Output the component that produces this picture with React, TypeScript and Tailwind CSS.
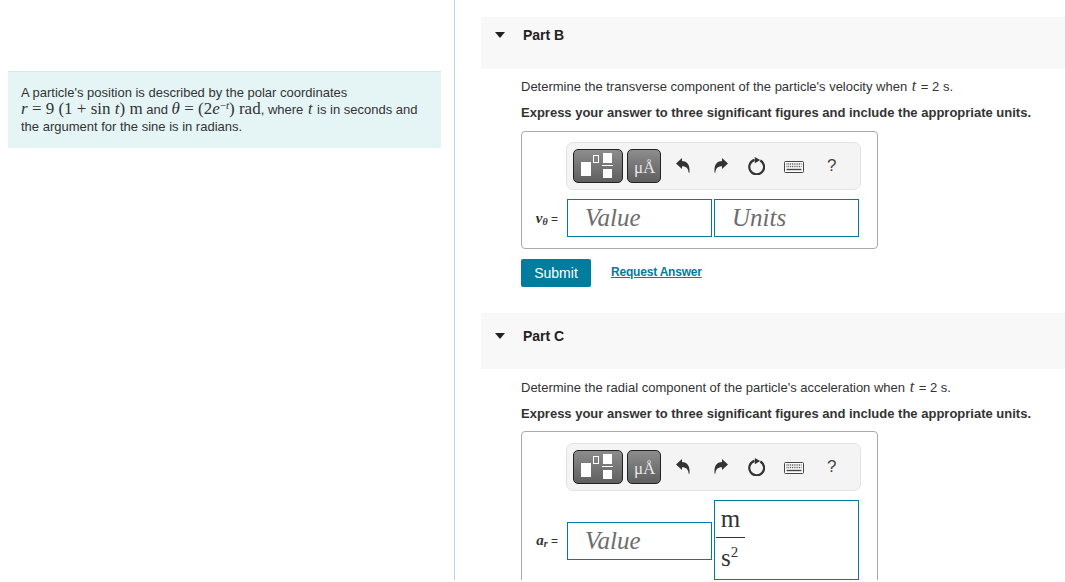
const sans = "font-['Liberation_Sans',Arial,sans-serif]";

function Undo({ flip }: { flip?: boolean }) {
  return (
    <svg width="14" height="15" viewBox="0 0 14 15" className={flip ? "-scale-x-100" : ""}>
      <path d="M0 5.500 L6 0 V3 C10.800 3 14.300 6.500 13.400 14.800 L12.600 14.800 C12.600 11 10.500 8.300 6 8.300 V11 Z" fill="#333" />
    </svg>
  );
}

function Reset() {
  return (
    <svg width="17" height="18" viewBox="0 0 17 18">
      <path d="M6.500 2.900 A7.400 7.400 0 1 0 12.300 3.500" fill="none" stroke="#333" strokeWidth="2.200" />
      <path d="M6.800 0 L12.200 3 L6.800 6.200 Z" fill="#333" />
    </svg>
  );
}

function Keyboard() {
  return (
    <svg width="20" height="12" viewBox="0 0 20 12">
      <rect x="0.500" y="0.500" width="19" height="11" rx="1" fill="#fff" stroke="#444" />
      <path d="M2.500 3 H17.500 M2.500 5.500 H17.500" stroke="#555" strokeWidth="1.400" strokeDasharray="1 0.800" />
      <path d="M2.500 8.500 H17.500" stroke="#444" strokeWidth="1.400" />
    </svg>
  );
}

function Toolbar() {
  return (
    <div className="ml-[44px] w-[295px] h-[48px] rounded-[7px] border border-[#e3e3e3] bg-[#f4f4f4] flex items-center pl-[6px]">
      <div className="w-[50px] h-[34px] rounded-[5px] border border-[#222] bg-gradient-to-b from-[#8d8d8d] to-[#5f5f5f] relative shrink-0">
        <span className="absolute left-[7px] top-[12px] w-[10px] h-[14px] bg-white" />
        <span className="absolute left-[19px] top-[5px] w-[6px] h-[8px] border border-white" />
        <span className="absolute left-[29px] top-[3px] w-[9px] h-[10px] bg-white" />
        <span className="absolute left-[28px] top-[15px] w-[11px] h-px bg-white" />
        <span className="absolute left-[29px] top-[19px] w-[9px] h-[9px] bg-white" />
      </div>
      <div className="ml-[4px] w-[34px] h-[34px] rounded-[5px] border border-[#222] bg-gradient-to-b from-[#8d8d8d] to-[#5f5f5f] shrink-0 relative text-[#e8e8e8] font-['Liberation_Serif',serif] text-[17px] leading-[20px]">
        <span className="absolute left-[6px] top-[8px]">μÅ</span>
      </div>
      <div className="ml-[15px] -mt-[1px] flex items-center"><Undo /></div>
      <div className="ml-[24px] -mt-[1px] flex items-center"><Undo flip /></div>
      <div className="ml-[20px] -mt-[1px] flex items-center"><Reset /></div>
      <div className="ml-[19px] mt-[1px] flex items-center"><Keyboard /></div>
      <span className={sans + " ml-[23px] -mt-[1px] text-[17px] text-[#444] leading-none"}>?</span>
    </div>
  );
}

function Field({ children, className }: { children: React.ReactNode; className?: string }) {
  return (
    <div className={"w-[145px] h-[38px] border border-[#007c9e] bg-white flex items-center pl-[17px] font-['Liberation_Serif',serif] italic text-[25px] text-[#6d6d6d] " + (className ?? "")}>
      {children}
    </div>
  );
}

function PartHeader({ label, h, top }: { label: string; h: string; top: string }) {
  return (
    <div className={"ml-[26px] bg-[#f8f8f8] flex items-start " + h + " " + top}>
      <span className="ml-[14px] mt-[15px] w-0 h-0 border-x-[5.5px] border-x-transparent border-t-[6px] border-t-[#222]" />
      <span className={sans + " ml-[18px] mt-[10px] text-[14px] font-bold text-[#222] leading-[16px]"}>{label}</span>
    </div>
  );
}

const Serif = ({ children }: { children: React.ReactNode }) => (
  <span className="font-['Liberation_Serif',serif] text-[17px] leading-none">{children}</span>
);
const I = ({ children }: { children: React.ReactNode }) => (
  <span className="font-['Liberation_Serif',serif] italic text-[17px] leading-none">{children}</span>
);
const T = () => (
  <span className="mx-[1px] font-['Liberation_Serif',serif] italic text-[16px] leading-none">t</span>
);

export default function App() {
  return (
    <div className={sans + " w-[1065px] h-[580px] overflow-hidden flex bg-white text-[#333]"}>
      <div className="w-[455px] h-full shrink-0 border-r border-[#bcd0e0] pl-[8px] pt-[71px]">
        <div className="w-[433px] h-[77px] bg-[#e5f5f6] border-t border-[#d8e4ea] pl-[13px] pt-[12px] text-[13px] leading-[17px] text-[#333]">
          <div>A particle's position is described by the polar coordinates</div>
          <div className="whitespace-nowrap h-[17px] -translate-y-[1px]">
            <I>r</I><Serif> = 9 (1 + sin </Serif><I>t</I><Serif>) m</Serif> and <I>θ</I><Serif> = (2</Serif><I>e</I><sup className="text-[11px] leading-none font-['Liberation_Serif',serif]">−<i>t</i></sup><Serif>) rad</Serif>, where <T /> is in seconds and
          </div>
          <div>the argument for the sine is in radians.</div>
        </div>
      </div>

      <div className="flex-1 pt-[17px]">
        <PartHeader label="Part B" h="h-[52px]" top="" />
        <div className="ml-[66px] text-[13px] leading-[16px] text-[#333]">
          <p className="mt-[9px]">Determine the transverse component of the particle's velocity when <T /> = 2 s.</p>
          <p className="mt-[10px] font-bold">Express your answer to three significant figures and include the appropriate units.</p>
          <div className="mt-[10px] w-[357px] h-[118px] rounded-[4px] border border-[#aaa] pt-[10px]">
            <Toolbar />
            <div className="mt-[9px] flex items-center">
              <span className="w-[45px] text-right pr-[9px] whitespace-nowrap text-[12px]"><span className="font-['Liberation_Serif',serif] italic text-[15px] font-bold">v<sub className="text-[10px]">θ</sub></span> =</span>
              <Field>Value</Field>
              <Field className="ml-[2px]">Units</Field>
            </div>
          </div>
          <div className="mt-[10px] flex items-center">
            <button className="w-[70px] h-[28px] rounded-[2px] bg-[#007c9e] text-white text-[14px]">Submit</button>
            <span className="ml-[20px] -mt-[2px] text-[12px] tracking-[-0.2px] font-bold text-[#007c9e] underline">Request Answer</span>
          </div>
        </div>

        <div className="mt-[26px]"><PartHeader label="Part C" h="h-[56px]" top="[&>span]:translate-y-[5px]" /></div>
        <div className="ml-[66px] text-[13px] leading-[16px] text-[#333]">
          <p className="mt-[10px]">Determine the radial component of the particle's acceleration when <T /> = 2 s.</p>
          <p className="mt-[10px] font-bold">Express your answer to three significant figures and include the appropriate units.</p>
          <div className="mt-[9px] w-[357px] h-[200px] rounded-[4px] border border-[#aaa] pt-[11px]">
            <Toolbar />
            <div className="mt-[9px] flex items-center">
              <span className="w-[45px] text-right pr-[9px] whitespace-nowrap text-[12px]"><span className="font-['Liberation_Serif',serif] italic text-[15px] font-bold">a<sub className="text-[10px]">r</sub></span> =</span>
              <Field className="mt-[1px]">Value</Field>
              <div className="ml-[2px] w-[145px] h-[80px] border border-[#007c9e] pl-[1px] font-['Liberation_Serif',serif] text-[25px] text-[#333] text-left">
                <div className="w-[29px] h-[37px] border-b border-[#333] text-center leading-[36px]">m</div>
                <div className="pl-[5px] leading-[40px]">s<sup className="text-[15px] leading-none -top-[9px]">2</sup></div>
              </div>
            </div>
          </div>
        </div>
      </div>
    </div>
  );
}
